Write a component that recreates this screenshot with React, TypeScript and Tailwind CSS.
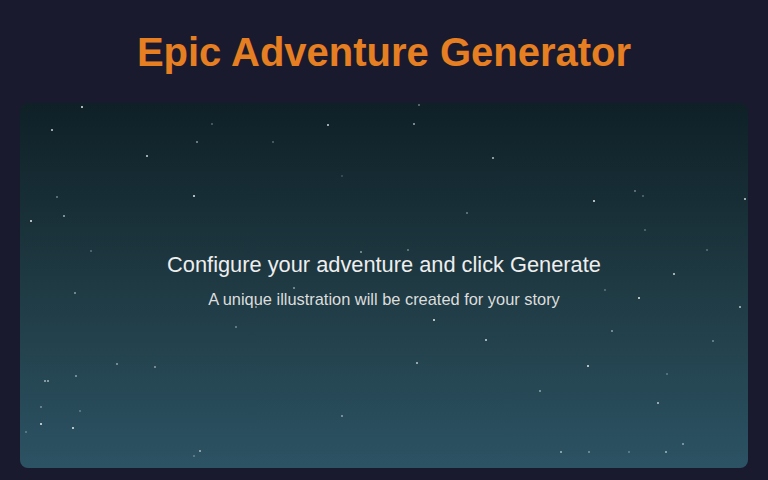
import React from "react";

const stars: [number, number, number, number][] = [
  [82, 107, 2.5, 0.9], [52, 130, 2.5, 0.8], [147, 156, 2.5, 0.8], [197, 142, 2, 0.5], [328, 125, 2.5, 0.8],
  [414, 124, 1.5, 0.6], [419, 105, 1.5, 0.4], [493, 158, 1.5, 0.7], [594, 201, 2.5, 0.9], [745, 199, 2.5, 0.8],
  [31, 221, 2.5, 0.9], [64, 216, 1.5, 0.6], [194, 196, 2.5, 0.9], [57, 197, 1.5, 0.4], [467, 213, 1.5, 0.4],
  [635, 191, 1.5, 0.4], [273, 142, 1.5, 0.3], [674, 274, 2.5, 0.8], [639, 298, 2.5, 0.9], [740, 307, 2.5, 0.7],
  [434, 320, 2.5, 0.9], [486, 340, 2.5, 0.8], [612, 331, 2, 0.5], [713, 341, 1.5, 0.4], [75, 293, 2, 0.5],
  [91, 251, 1.5, 0.3], [236, 327, 1.5, 0.4], [256, 307, 1.5, 0.5], [361, 252, 1.5, 0.5], [408, 250, 1.5, 0.4],
  [294, 288, 2, 0.5], [417, 363, 2.5, 0.7], [588, 366, 2.5, 0.9], [540, 391, 1.5, 0.5], [658, 403, 2, 0.7],
  [667, 374, 1.5, 0.3], [45, 381, 1.5, 0.6], [48, 381, 1.5, 0.6], [76, 376, 1.5, 0.5], [117, 364, 2, 0.5],
  [155, 367, 1.5, 0.5], [41, 424, 2.5, 0.9], [73, 428, 2.5, 0.9], [41, 407, 1.5, 0.4], [200, 451, 2, 0.6],
  [194, 456, 1.5, 0.3], [342, 416, 2, 0.5], [561, 452, 2, 0.6], [589, 452, 1.5, 0.4], [629, 452, 1.5, 0.3],
  [666, 452, 1.5, 0.6], [683, 444, 1.5, 0.5], [26, 432, 1.5, 0.3], [80, 411, 1.5, 0.3], [212, 124, 1.5, 0.3],
  [342, 176, 1.5, 0.2], [605, 290, 1.5, 0.3], [707, 250, 1.5, 0.3], [645, 230, 1.5, 0.3], [643, 196, 1.5, 0.3],
];

export default function App() {
  return (
    <div
      className="w-[768px] h-[480px] bg-[#1a1a2e] flex flex-col items-center"
      style={{ fontFamily: '"Liberation Sans", Arial, sans-serif' }}
    >
      <h1 className="mt-[28px] text-[40px] leading-[48px] font-bold text-[#e67e22]">
        Epic Adventure Generator
      </h1>
      <div className="relative mt-[27px] w-[728px] h-[365px] rounded-[8px] overflow-hidden bg-gradient-to-b from-[#0f2027] via-[#1f3a43] to-[#2c5364] flex flex-col items-center justify-center pb-[8px]">
        {stars.map(([x, y, s, o], i) => (
          <div
            key={i}
            className="absolute rounded-full bg-white"
            style={{ left: x - 20 - s / 2, top: y - 103 - s / 2, width: s, height: s, opacity: o }}
          />
        ))}
        <div className="relative text-[21.8px] leading-[26px] text-[#eeeeee] -translate-y-[1px]">
          Configure your adventure and click Generate
        </div>
        <div className="relative mt-[8px] text-[16.4px] leading-[24px] text-[#dddddd]">
          A unique illustration will be created for your story
        </div>
      </div>
    </div>
  );
}
